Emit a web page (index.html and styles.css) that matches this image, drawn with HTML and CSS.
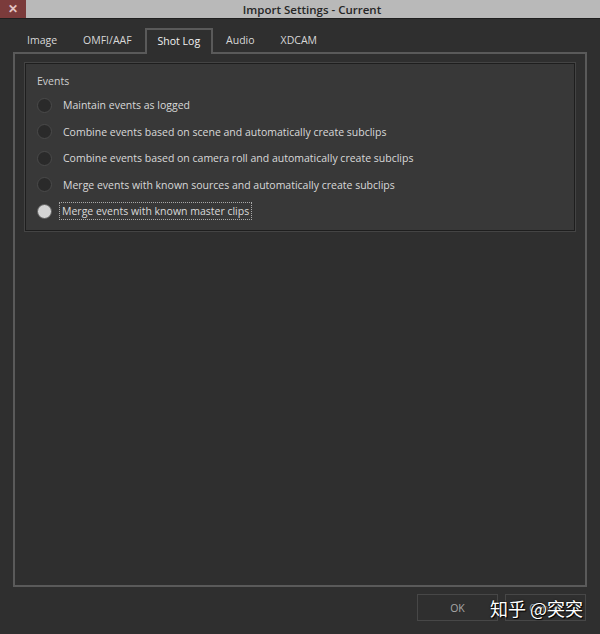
FILE: index.html
```html
<!DOCTYPE html>
<html lang="en">
<head>
  <meta charset="UTF-8" />
  <title>Import Settings - Current</title>
  <link rel="stylesheet" href="styles.css">
</head>
<body>
  <div class="titlebar">
    <div class="close">&#x2715;</div>
    <div class="title">Import Settings - Current</div>
  </div>

  <ul class="tabs">
    <li>Image</li>
    <li>OMFI/AAF</li>
    <li class="active">Shot Log</li>
    <li>Audio</li>
    <li>XDCAM</li>
  </ul>

  <div class="pane">
    <div class="group">
      <div class="group-title">Events</div>
      <label class="radio"><span class="dot"></span><span class="text">Maintain events as logged</span></label>
      <label class="radio"><span class="dot"></span><span class="text">Combine events based on scene and automatically create subclips</span></label>
      <label class="radio"><span class="dot"></span><span class="text">Combine events based on camera roll and automatically create subclips</span></label>
      <label class="radio"><span class="dot"></span><span class="text">Merge events with known sources and automatically create subclips</span></label>
      <label class="radio checked"><span class="dot"></span><span class="text focus">Merge events with known master clips</span></label>
    </div>
  </div>

  <div class="buttons">
    <button class="btn">OK</button>
    <button class="btn">Cancel</button>
    <div class="watermark">知乎 @突突</div>
  </div>
</body>
</html>
```

FILE: styles.css
```css
* {
  box-sizing: border-box;
}
body {
  margin: 0;
  width: 600px;
  height: 634px;
  overflow: hidden;
  background-color: #2f2f2f;
  color: #d6d6d6;
  font-family: 'Open Sans', sans-serif;
  font-size: 10.5px;
}
.titlebar {
  height: 19px;
  background-color: #b9b9b9;
  display: flex;
  align-items: center;
  border-bottom: 1px solid #1f1f1f;
}
.close {
  width: 26px;
  height: 18px;
  background-color: #7b3b3b;
  color: #e3c4c4;
  font-size: 12px;
  font-weight: bold;
  line-height: 18px;
  text-align: center;
}
.title {
  flex: 1;
  text-align: center;
  font-weight: 600;
  font-size: 11.5px;
  color: #262626;
  padding-right: 2px;
}
.tabs {
  list-style: none;
  margin: 9px 0 0 14px;
  padding: 0;
  display: flex;
  height: 24px;
}
.tabs li {
  padding: 0 13px;
  line-height: 24px;
  color: #d8d8d8;
  font-size: 10.5px;
}
.tabs li.active {
  color: #f2f2f2;
  border: 2px solid #5a5a5a;
  border-bottom: none;
  line-height: 22px;
  padding: 0 11px;
  background-color: #2f2f2f;
  height: 26px;
  margin-bottom: -2px;
  position: relative;
  z-index: 1;
}
.pane {
  margin: 0 13px;
  height: 535px;
  border: 2px solid #5a5a5a;
  padding: 9px 10px;
}
.group {
  height: 168px;
  background-color: #383838;
  border: 1px solid #1e1e1e;
  box-shadow: 0 0 0 1px #444;
  padding: 0 11px;
}
.group-title {
  margin-top: 10px;
  height: 18px;
  color: #cfcfcf;
}
.radio {
  display: flex;
  align-items: center;
  height: 26.5px;
}
.dot {
  width: 15px;
  height: 15px;
  border-radius: 50%;
  background-color: #2a2a2a;
  border: 1px solid #4a4a4a;
  margin-right: 11px;
}
.radio.checked .dot {
  background-color: #d4d4d4;
  border-color: #5c5c5c;
}
.text {
  color: #d8d8d8;
}
.focus {
  outline: 1px dotted #aaa;
  padding: 1px 2px;
  margin-left: -3px;
}
.buttons {
  position: relative;
  display: flex;
  justify-content: flex-end;
  gap: 7px;
  margin: 7px 14px 0 0;
}
.btn {
  width: 81px;
  height: 27px;
  background-color: #2f2f2f;
  border: 1px solid #474747;
  color: #a8a8a8;
  font-family: 'Open Sans', sans-serif;
  font-size: 10.5px;
}
.watermark {
  position: absolute;
  right: 3px;
  top: 1px;
  color: #fff;
  font-family: 'Noto Sans CJK SC', sans-serif;
  font-size: 18px;
  text-shadow: 0 0 2px #000, 1px 1px 1px #000;
}
```
